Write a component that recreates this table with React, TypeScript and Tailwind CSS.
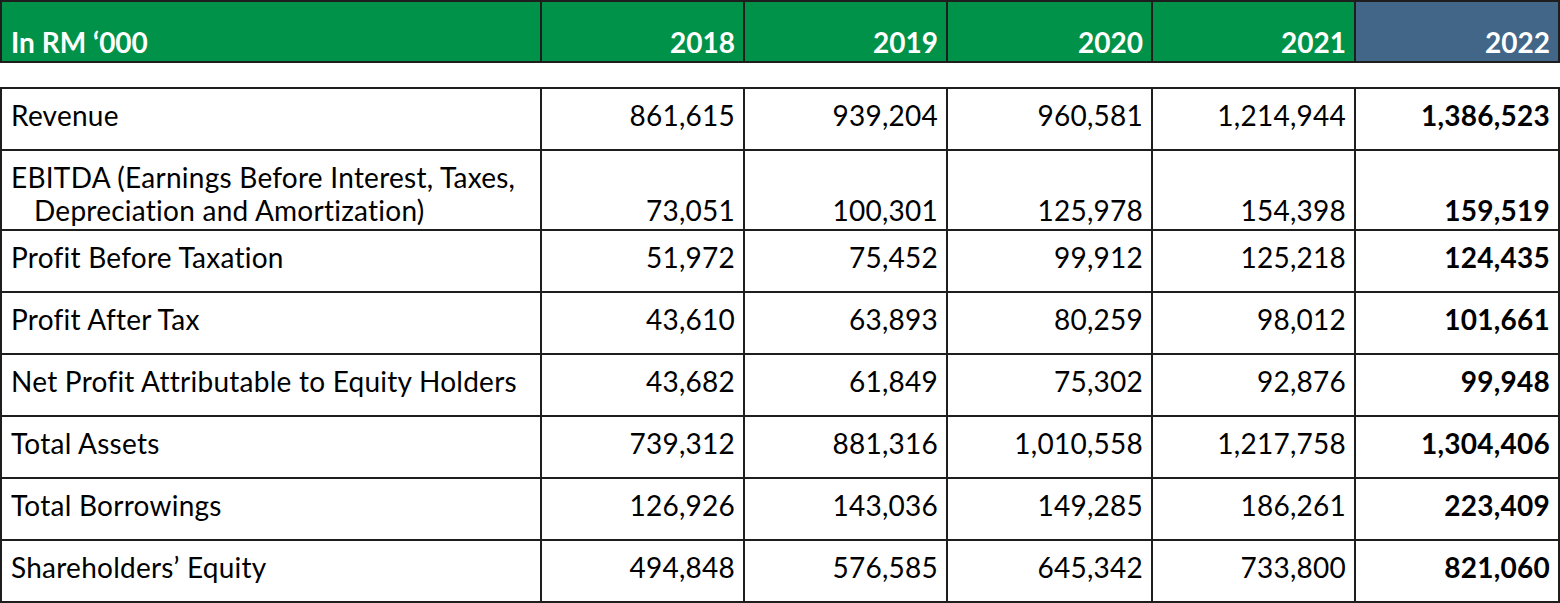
import React from "react";

type Row = {
  label: string;
  indent?: string;
  values: string[];
  tall?: boolean;
};

const YEARS = ["2018", "2019", "2020", "2021", "2022"];

const ROWS: Row[] = [
  { label: "Revenue", values: ["861,615", "939,204", "960,581", "1,214,944", "1,386,523"] },
  {
    label: "EBITDA (Earnings Before Interest, Taxes,",
    indent: "Depreciation and Amortization)",
    values: ["73,051", "100,301", "125,978", "154,398", "159,519"],
    tall: true,
  },
  { label: "Profit Before Taxation", values: ["51,972", "75,452", "99,912", "125,218", "124,435"] },
  { label: "Profit After Tax", values: ["43,610", "63,893", "80,259", "98,012", "101,661"] },
  { label: "Net Profit Attributable to Equity Holders", values: ["43,682", "61,849", "75,302", "92,876", "99,948"] },
  { label: "Total Assets", values: ["739,312", "881,316", "1,010,558", "1,217,758", "1,304,406"] },
  { label: "Total Borrowings", values: ["126,926", "143,036", "149,285", "186,261", "223,409"] },
  { label: "Shareholders’ Equity", values: ["494,848", "576,585", "645,342", "733,800", "821,060"] },
];

// widths of the year columns (each includes its right border)
const COL_W = ["w-[203px]", "w-[203px]", "w-[205px]", "w-[203px]", "flex-1"];

export default function App() {
  return (
    <div className="w-[1560px] h-[603px] bg-white font-['Lato','Liberation_Sans',sans-serif] text-black">
      {/* Header */}
      <div className="flex h-[63px] border-2 border-[#1e1e1e] text-white font-bold text-[28px] leading-[33px]">
        <div className="w-[540px] shrink-0 border-r-2 border-[#1e1e1e] bg-[#009248] flex items-end pl-[9px] pb-[2px]">
          In RM ‘000
        </div>
        {YEARS.map((y, i) => (
          <div
            key={y}
            className={`${COL_W[i]} shrink-0 flex items-end justify-end pr-[8px] pb-[2px] ${
              i < 4 ? "border-r-2 border-[#1e1e1e] bg-[#009248]" : "bg-[#416688]"
            }`}
          >
            {y}
          </div>
        ))}
      </div>

      {/* Body */}
      <div className="mt-[24px] border-2 border-b-0 border-[#1e1e1e] text-[28px] leading-[33px] tracking-[0.25px]">
        {ROWS.map((r) => (
          <div
            key={r.label}
            className={`flex border-b-2 border-[#1e1e1e] ${r.tall ? "h-[80px]" : "h-[62px]"}`}
          >
            <div className="w-[540px] shrink-0 border-r-2 border-[#1e1e1e] pl-[9px] pt-[10px] whitespace-nowrap">
              <div>{r.label}</div>
              {r.indent && <div className="pl-[23px]">{r.indent}</div>}
            </div>
            {r.values.map((v, i) => (
              <div
                key={i}
                className={`${COL_W[i]} shrink-0 text-right pr-[8px] ${r.tall ? "pt-[43px]" : "pt-[10px]"} ${
                  i < 4 ? "border-r-2 border-[#1e1e1e]" : "font-bold"
                }`}
              >
                {v}
              </div>
            ))}
          </div>
        ))}
      </div>
    </div>
  );
}
